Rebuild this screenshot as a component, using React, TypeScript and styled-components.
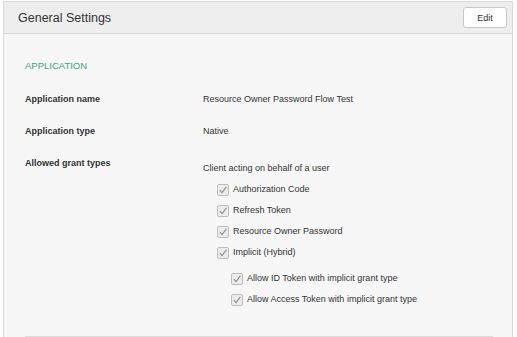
import React from 'react';
import styled, { createGlobalStyle } from 'styled-components';

const GlobalStyle = createGlobalStyle`
  html, body {
    margin: 0;
    padding: 0;
    background: #ffffff;
  }
  body {
    font-family: "Liberation Sans", Arial, sans-serif;
    color: #333;
  }
`;

const Page = styled.div`
  padding: 1px 4px 0 3px;
  height: 337px;
  box-sizing: border-box;
  overflow: hidden;
`;

const Panel = styled.section`
  border: 1px solid #d9d9d9;
  border-bottom: none;
  background: #f7f7f7;
  height: 340px;
`;

const Header = styled.header`
  display: flex;
  align-items: center;
  justify-content: space-between;
  height: 31px;
  padding: 0 5px 0 14px;
  background: #eeeeee;
  border-bottom: 1px solid #d9d9d9;
`;

const Title = styled.h2`
  margin: 0;
  font-size: 12.5px;
  font-weight: 400;
  color: #333;
`;

const EditButton = styled.button`
  width: 44px;
  height: 21px;
  background: #fff;
  border: 1px solid #c8c8c8;
  border-radius: 3px;
  font-family: inherit;
  font-size: 9px;
  color: #333;
  padding: 0;
`;

const Body = styled.div`
  padding: 26px 19px 0 21px;
`;

const SectionTitle = styled.h3`
  margin: 0 0 23px;
  font-size: 9.5px;
  font-weight: 400;
  color: #3aa57d;
  text-transform: uppercase;
`;

const Row = styled.div`
  display: grid;
  grid-template-columns: 178px 1fr;
  margin-bottom: 21px;
  font-size: 9px;
  line-height: 11px;
`;

const Label = styled.div`
  font-weight: 700;
  color: #333;
`;

const Value = styled.div<{ $offset?: number }>`
  color: #333;
  padding-top: ${p => p.$offset ?? 0}px;
`;

const Lead = styled.div`
  margin-bottom: 10px;
`;

const CheckList = styled.ul<{ $indent: number; $top?: number }>`
  list-style: none;
  margin: ${p => p.$top ?? 0}px 0 0;
  padding: 0 0 0 ${p => p.$indent}px;
  display: flex;
  flex-direction: column;
  gap: 10px;
`;

const CheckItem = styled.li`
  display: flex;
  align-items: center;
  gap: 4px;
  height: 11px;
`;

const Box = styled.span`
  display: inline-flex;
  align-items: center;
  justify-content: center;
  width: 12px;
  height: 12px;
  box-sizing: border-box;
  border: 1px solid #bdbdbd;
  border-radius: 2px;
  background: #ececec;
`;

const Divider = styled.div`
  margin-top: 31px;
  height: 1px;
  background: #dcdcdc;
`;

function Check({ label }: { label: string }) {
  return (
    <CheckItem>
      <Box>
        <svg width="10" height="10" viewBox="0 0 10 10">
          <path d="M1.8 5.2 L4 7.6 L8.4 1.8" fill="none" stroke="#8c8c8c" strokeWidth="1.1" />
        </svg>
      </Box>
      {label}
    </CheckItem>
  );
}

export default function App() {
  return (
    <>
      <GlobalStyle />
      <Page>
        <Panel>
          <Header>
            <Title>General Settings</Title>
            <EditButton>Edit</EditButton>
          </Header>
          <Body>
            <SectionTitle>Application</SectionTitle>
            <Row>
              <Label>Application name</Label>
              <Value>Resource Owner Password Flow Test</Value>
            </Row>
            <Row>
              <Label>Application type</Label>
              <Value>Native</Value>
            </Row>
            <Row>
              <Label>Allowed grant types</Label>
              <Value $offset={5}>
                <Lead>Client acting on behalf of a user</Lead>
                <CheckList $indent={14}>
                  <Check label="Authorization Code" />
                  <Check label="Refresh Token" />
                  <Check label="Resource Owner Password" />
                  <Check label="Implicit (Hybrid)" />
                  <CheckList $indent={14} $top={5}>
                    <Check label="Allow ID Token with implicit grant type" />
                    <Check label="Allow Access Token with implicit grant type" />
                  </CheckList>
                </CheckList>
              </Value>
            </Row>
            <Divider />
          </Body>
        </Panel>
      </Page>
    </>
  );
}
